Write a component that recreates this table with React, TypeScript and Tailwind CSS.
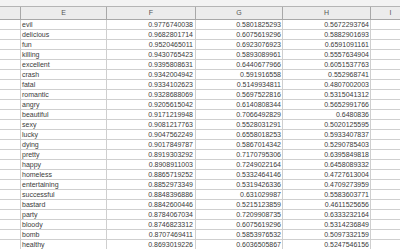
import React from "react";

const rows: [string, string, string, string][] = [
  ["evil", "0.9776740038", "0.5801825293", "0.5672293764"],
  ["delicious", "0.9682801714", "0.6075619296", "0.5882901693"],
  ["fun", "0.9520465011", "0.6923076923", "0.6591091161"],
  ["killing", "0.9430765423", "0.5893089961", "0.5557634904"],
  ["excellent", "0.9395808631", "0.6440677966", "0.6051537763"],
  ["crash", "0.9342004942", "0.591916558", "0.552968741"],
  ["fatal", "0.9334102623", "0.5149934811", "0.4807002003"],
  ["romantic", "0.9328688069", "0.5697522816", "0.5315041312"],
  ["angry", "0.9205615042", "0.6140808344", "0.5652991766"],
  ["beautiful", "0.9171219948", "0.7066492829", "0.6480836"],
  ["sexy", "0.9081217763", "0.5528031291", "0.5020125595"],
  ["lucky", "0.9047562249", "0.6558018253", "0.5933407837"],
  ["dying", "0.9017849787", "0.5867014342", "0.5290785403"],
  ["pretty", "0.8919303292", "0.7170795306", "0.6395849818"],
  ["happy", "0.8908911003", "0.7249022164", "0.6458089332"],
  ["homeless", "0.8865719252", "0.5332464146", "0.4727613004"],
  ["entertaining", "0.8852973349", "0.5319426336", "0.4709273959"],
  ["successful", "0.8848396886", "0.631029987", "0.5583603771"],
  ["bastard", "0.8842600446", "0.5215123859", "0.4611525656"],
  ["party", "0.8784067034", "0.7209908735", "0.6333232164"],
  ["bloody", "0.8746823312", "0.6075619296", "0.5314236849"],
  ["bomb", "0.8707469411", "0.5853976532", "0.5097332159"],
  ["healthy", "0.8693019226", "0.6036505867", "0.5247546156"],
];

const cols = "grid grid-cols-[21px_86px_89px_87px_88px_40px]";

export default function App() {
  return (
    <div
      className="w-[400px] h-[249px] overflow-hidden bg-white text-[#3a3a3a]"
      style={{ fontFamily: '"Liberation Sans", Arial, sans-serif' }}
    >
      <div className="h-[7px] bg-[#f3f3f3] border-b border-[#b5b5b5]" />
      <div className={`${cols} h-[13px] bg-[#ececec] border-b border-[#a8a8a8] text-[7px] leading-[12px] text-[#555]`}>
        <div className="border-r border-[#a8a8a8]" />
        {["E", "F", "G", "H", "I"].map((c) => (
          <div key={c} className="border-r border-[#a8a8a8] text-center">
            {c}
          </div>
        ))}
      </div>
      {rows.map((r) => (
        <div key={r[0]} className={`${cols} h-[10px] text-[7px] leading-[9px]`}>
          <div className="border-r border-b border-[#cfcfcf]" />
          <div className="border-r border-b border-[#cfcfcf] pl-[1px] whitespace-nowrap overflow-hidden">
            {r[0]}
          </div>
          <div className="border-r border-b border-[#cfcfcf] pr-[2px] text-right">{r[1]}</div>
          <div className="border-r border-b border-[#cfcfcf] pr-[1px] text-right">{r[2]}</div>
          <div className="border-r border-b border-[#cfcfcf] pr-[1px] text-right">{r[3]}</div>
          <div className="border-r border-b border-[#cfcfcf]" />
        </div>
      ))}
    </div>
  );
}
